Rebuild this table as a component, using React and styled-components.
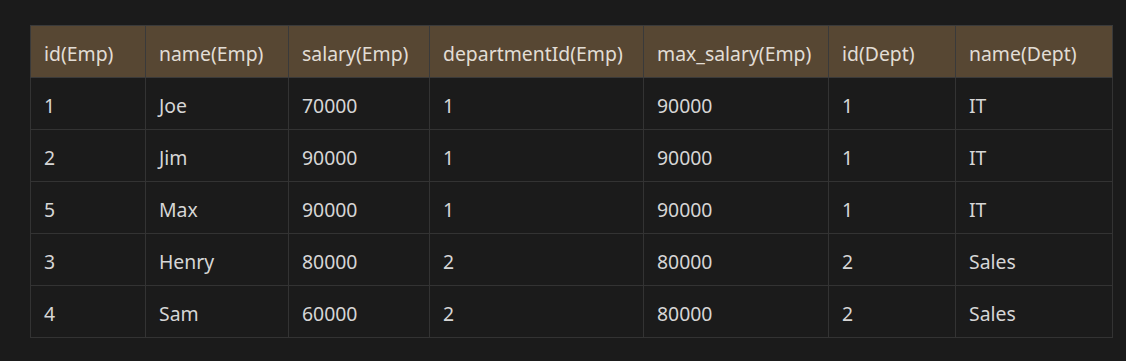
import React from "react";
import styled, { createGlobalStyle } from "styled-components";

const Global = createGlobalStyle`
  html, body { margin: 0; padding: 0; background: #1b1b1b; }
  body { font-family: "Noto Sans", "Open Sans", sans-serif; }
`;

const Wrap = styled.div`
  padding: 25px 15px 24px 30px;
  background: #1b1b1b;
`;

const Table = styled.table`
  border-collapse: collapse;
  table-layout: fixed;
  width: 1082px;
  color: #d6d6d6;
  font-size: 19.4px;
`;

const Th = styled.th`
  background: #574733;
  border: 1px solid #3a3a3a;
  height: 52px;
  padding: 4px 0 0 13px;
  text-align: left;
  font-weight: 400;
  color: #e2ddd5;
  box-sizing: border-box;
`;

const Td = styled.td`
  border: 1px solid #333333;
  height: 52px;
  padding: 3px 0 0 13px;
  text-align: left;
  box-sizing: border-box;
`;

const cols = [
  ["id(Emp)", 115],
  ["name(Emp)", 143],
  ["salary(Emp)", 141],
  ["departmentId(Emp)", 214],
  ["max_salary(Emp)", 185],
  ["id(Dept)", 127],
  ["name(Dept)", 157],
];

const rows = [
  ["1", "Joe", "70000", "1", "90000", "1", "IT"],
  ["2", "Jim", "90000", "1", "90000", "1", "IT"],
  ["5", "Max", "90000", "1", "90000", "1", "IT"],
  ["3", "Henry", "80000", "2", "80000", "2", "Sales"],
  ["4", "Sam", "60000", "2", "80000", "2", "Sales"],
];

export default function App() {
  return (
    <>
      <Global />
      <Wrap>
        <Table>
          <colgroup>
            {cols.map(([n, w]) => (
              <col key={n} style={{ width: w }} />
            ))}
          </colgroup>
          <thead>
            <tr>
              {cols.map(([n]) => (
                <Th key={n}>{n}</Th>
              ))}
            </tr>
          </thead>
          <tbody>
            {rows.map((r, i) => (
              <tr key={i}>
                {r.map((c, j) => (
                  <Td key={j}>{c}</Td>
                ))}
              </tr>
            ))}
          </tbody>
        </Table>
      </Wrap>
    </>
  );
}
